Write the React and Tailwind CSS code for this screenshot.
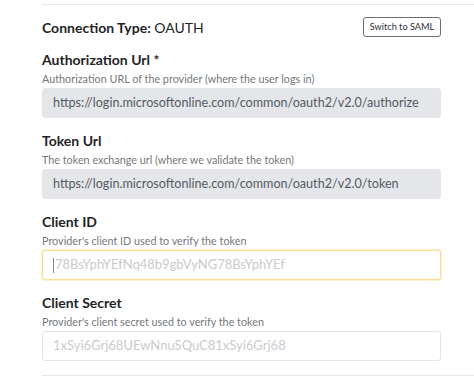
import React from 'react'

const FONT = { fontFamily: 'Lato, "Open Sans", sans-serif' }

function Field({ label, hint, value, placeholder, variant }) {
  const box =
    variant === 'disabled'
      ? 'bg-[#e4e6ea] border-[#e4e6ea] text-[#555b63]'
      : variant === 'focus'
        ? 'bg-white border-[#f9dd95] shadow-[0_0_0_1px_#fdf0cc]'
        : 'bg-white border-[#e2e4e8]'
  return (
    <div className="flex flex-col">
      <div className="h-[16px] text-[14px] leading-[16px] font-bold text-[#1f2326]">{label}</div>
      <div className="mt-[4px] h-[14px] text-[10.8px] leading-[14px] text-[#74787c]">{hint}</div>
      <div
        className={`relative mt-[2px] h-[30px] rounded-[3px] border flex items-center pl-[10px] text-[12.6px] ${box}`}
      >
        {variant === 'focus' && (
          <span className="absolute left-[10px] top-[7px] h-[15px] w-px bg-[#8a8a8a]" />
        )}
        {value ? (
          <span>{value}</span>
        ) : (
          <span className={variant === 'focus' ? 'pl-[2px] text-[#c9cbce] text-[13px]' : 'text-[#c9cbce] text-[13px]'}>
            {placeholder}
          </span>
        )}
      </div>
    </div>
  )
}

export default function App() {
  return (
    <div className="w-[474px] h-[378px] bg-white overflow-hidden" style={FONT}>
      <div className="mt-[4px] ml-[42px] border-t border-[#e6e8eb]" />
      <div className="pl-[42px] pr-[33px] pt-[12px] flex flex-col">
        {/* Connection type row */}
        <div className="flex items-center justify-between h-[20px]">
          <div className="text-[14px] text-[#1f2326]">
            <span className="font-bold">Connection Type:</span> OAUTH
          </div>
          <button className="h-[20px] w-[78px] rounded-[3px] border border-[#6b6f73] text-[9.2px] text-[#2b2f33] leading-none">
            Switch to SAML
          </button>
        </div>

        <div className="mt-[15px] flex flex-col gap-[15px]">
          <Field
            label="Authorization Url *"
            hint="Authorization URL of the provider (where the user logs in)"
            value="https://login.microsoftonline.com/common/oauth2/v2.0/authorize"
            variant="disabled"
          />
          <Field
            label="Token Url"
            hint="The token exchange url (where we validate the token)"
            value="https://login.microsoftonline.com/common/oauth2/v2.0/token"
            variant="disabled"
          />
          <Field
            label="Client ID"
            hint="Provider's client ID used to verify the token"
            placeholder="78BsYphYEfNq48b9gbVyNG78BsYphYEf"
            variant="focus"
          />
          <Field
            label="Client Secret"
            hint="Provider's client secret used to verify the token"
            placeholder="1xSyi6Grj68UEwNnuSQuC81xSyi6Grj68"
          />
        </div>
      </div>
      <div className="mt-[14px] ml-[42px] border-t border-[#e6e8eb]" />
    </div>
  )
}
